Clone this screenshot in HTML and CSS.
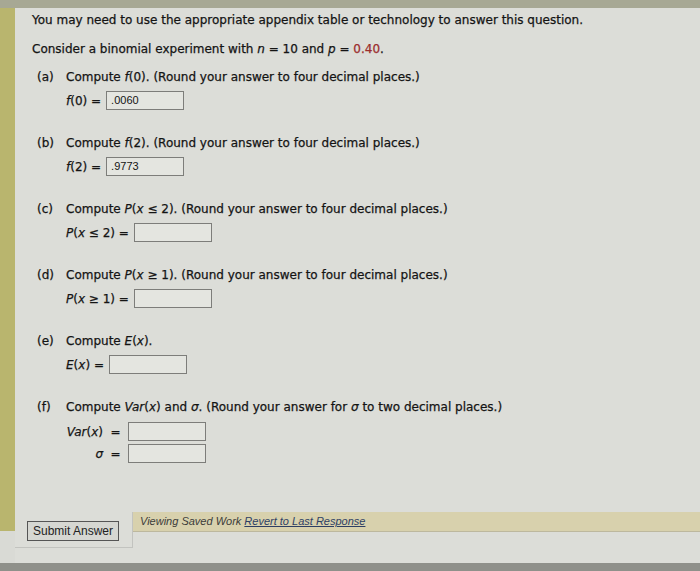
FILE: index.html
```html
<!DOCTYPE html>
<html>
<head>
<meta charset="utf-8">
<link rel="stylesheet" href="styles.css">
</head>
<body>
<div class="topbar"></div>
<div class="frame">
  <div class="side"></div>
  <div class="panel">
    <div class="content">
      <p class="intro">You may need to use the appropriate appendix table or technology to answer this question.</p>
      <p class="intro second">Consider a binomial experiment with <i>n</i> = 10 and <i>p</i> = <span class="red">0.40</span>.</p>

      <div class="q">
        <div class="qline"><span class="lbl">(a)</span><span>Compute <i>f</i>(0). (Round your answer to four decimal places.)</span></div>
        <div class="ans"><span><i>f</i>(0) = </span><span class="box">.0060</span></div>
      </div>

      <div class="q">
        <div class="qline"><span class="lbl">(b)</span><span>Compute <i>f</i>(2). (Round your answer to four decimal places.)</span></div>
        <div class="ans"><span><i>f</i>(2) = </span><span class="box">.9773</span></div>
      </div>

      <div class="q">
        <div class="qline"><span class="lbl">(c)</span><span>Compute <i>P</i>(<i>x</i> ≤ 2). (Round your answer to four decimal places.)</span></div>
        <div class="ans"><span><i>P</i>(<i>x</i> ≤ 2) = </span><span class="box"></span></div>
      </div>

      <div class="q">
        <div class="qline"><span class="lbl">(d)</span><span>Compute <i>P</i>(<i>x</i> ≥ 1). (Round your answer to four decimal places.)</span></div>
        <div class="ans"><span><i>P</i>(<i>x</i> ≥ 1) = </span><span class="box"></span></div>
      </div>

      <div class="q">
        <div class="qline"><span class="lbl">(e)</span><span>Compute <i>E</i>(<i>x</i>).</span></div>
        <div class="ans"><span><i>E</i>(<i>x</i>) = </span><span class="box"></span></div>
      </div>

      <div class="q last">
        <div class="qline"><span class="lbl">(f)</span><span>Compute <i>Var</i>(<i>x</i>) and <i>σ</i>. (Round your answer for <i>σ</i> to two decimal places.)</span></div>
        <div class="grid2">
          <span class="gl"><i>Var</i>(<i>x</i>)</span><span class="eq">=</span><span class="box"></span>
          <span class="gl"><i>σ</i></span><span class="eq">=</span><span class="box"></span>
        </div>
      </div>
    </div>
    <div class="footer">
      <div class="submitwrap"><button class="submit">Submit Answer</button></div>
      <div class="saved"><i>Viewing Saved Work</i> <a class="revert"><i>Revert to Last Response</i></a></div>
    </div>
    <div class="bottomarea"></div>
  </div>
</div>
<div class="bottombar"></div>
</body>
</html>
```
FILE: styles.css
```css
html, body {
  margin: 0;
  padding: 0;
}
body {
  width: 700px;
  height: 571px;
  overflow: hidden;
  background: #d9dad5;
  font-family: "DejaVu Sans", Verdana, sans-serif;
  font-size: 12px;
  color: #141414;
  -webkit-text-stroke: 0.25px #141414;
}
.topbar {
  height: 8px;
  background: #a7a894;
}
.frame {
  display: flex;
  height: 555px;
}
.side {
  width: 15px;
  height: 523px;
  background: #b9b56e;
  flex: none;
}
.panel {
  flex: 1;
  display: flex;
  flex-direction: column;
  background: #dcddd8;
}
.content {
  padding: 5px 0 0 17px;
  height: 499px;
}
p {
  margin: 0;
}
.intro {
  line-height: 14px;
}
.second {
  margin-top: 15px;
}
.red {
  color: #9b2d2d;
  -webkit-text-stroke-color: #9b2d2d;
}
.q {
  margin-top: 14px;
  margin-left: 5px;
}
.q + .q {
  margin-top: 26px;
}
.qline {
  display: flex;
  line-height: 14px;
}
.lbl {
  width: 29px;
  flex: none;
}
.ans {
  display: flex;
  align-items: center;
  margin-left: 29px;
  margin-top: 7px;
  gap: 5px;
}
.box {
  display: inline-block;
  width: 72px;
  height: 17px;
  border: 1px solid #7d7d7a;
  background: #e4e5e0;
  font-family: "Liberation Sans", Arial, sans-serif;
  font-size: 11px;
  line-height: 17px;
  padding-left: 4px;
  box-sizing: content-box;
  -webkit-text-stroke: 0;
}
.grid2 {
  display: grid;
  grid-template-columns: 37px 25px auto;
  row-gap: 3px;
  align-items: center;
  margin-left: 29px;
  margin-top: 8px;
  justify-content: start;
}
.gl {
  text-align: right;
}
.eq {
  text-align: center;
}
.footer {
  display: flex;
  align-items: flex-start;
}
.submitwrap {
  width: 118px;
  height: 36px;
  border: 1px solid #c2c3bf;
  border-top: none;
  border-left: none;
  box-sizing: border-box;
  display: flex;
  align-items: flex-end;
  padding: 0 0 6px 12px;
  -webkit-text-stroke: 0;
}
.submit {
  font-family: "Liberation Sans", Arial, sans-serif;
  font-size: 12px;
  color: #222;
  background: #d6d7d2;
  border: 1px solid #555;
  padding: 0 5px;
  height: 20px;
  margin: 0;
}
.saved {
  flex: 1;
  height: 19px;
  background: #d8d1ad;
  border-bottom: 1px solid #bdb89e;
  font-family: "Liberation Sans", Arial, sans-serif;
  font-size: 11px;
  color: #3c3c3a;
  line-height: 19px;
  padding-left: 7px;
  -webkit-text-stroke: 0;
}
.revert {
  color: #2e3f64;
  text-decoration: underline;
}
.bottomarea {
  flex: 1;
}
.bottombar {
  height: 8px;
  background: #8f908a;
}
```
